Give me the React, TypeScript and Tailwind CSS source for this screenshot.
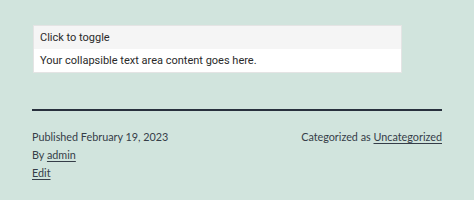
import React from 'react';

export default function App() {
  return (
    <div className="w-[474px] h-[200px] bg-[#d1e4dd] pt-[25px] overflow-hidden">
      {/* Collapsible block */}
      <div className="ml-[33px] w-[369px] border border-[#e4e4e4] font-['Roboto',sans-serif] text-[11px] text-[#2a2a2a]">
        <div className="h-[23px] bg-[#f5f5f5] pl-[6px] leading-[23px]">Click to toggle</div>
        <div className="h-[23px] bg-white pl-[6px] leading-[23px]">Your collapsible text area content goes here.</div>
      </div>

      {/* Post footer */}
      <div className="mx-[32px] mt-[36px] h-[2px] bg-[#28303d]" />
      <div className="mx-[32px] mt-[17px] flex justify-between font-['Lato',sans-serif] text-[10.8px] leading-[18px] text-[#353d48]">
        <div className="flex flex-col">
          <span>Published February 19, 2023</span>
          <span>
            By <a className="underline underline-offset-2">admin</a>
          </span>
          <span>
            <a className="underline underline-offset-2">Edit</a>
          </span>
        </div>
        <div>
          Categorized as <a className="underline underline-offset-2">Uncategorized</a>
        </div>
      </div>
    </div>
  );
}
